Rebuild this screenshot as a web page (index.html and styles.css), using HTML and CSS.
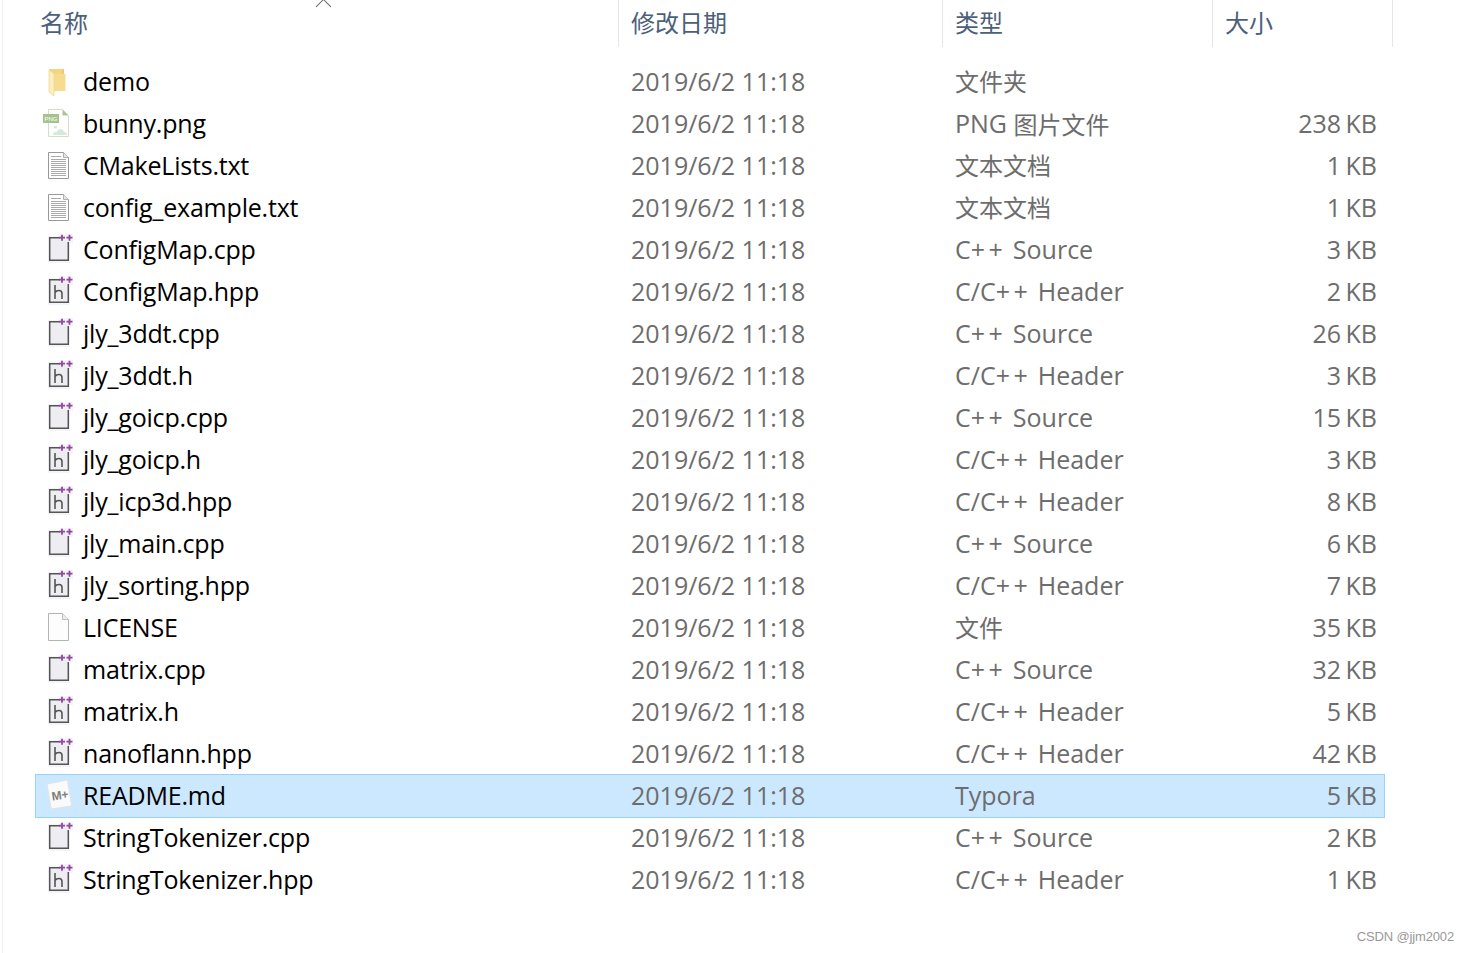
FILE: index.html
```html
<!DOCTYPE html>
<html lang="zh-CN">
<head>
  <meta charset="UTF-8">
  <title>文件列表</title>
  <link rel="stylesheet" href="styles.css">
</head>
<body>

<svg class="defs" width="0" height="0">
  <symbol id="i-folder" viewBox="0 0 26 32">
    <path d="M2 4h15v22H2z" fill="#f5d582"/>
    <path d="M7 9h11.500v17H7z" fill="#f7dc90"/>
    <path d="M17 4v5h-2V4z" fill="#eccb74"/>
    <path d="M2 5l5 3.500V31l-5-4z" fill="#fdefbd" stroke="#ecd48c" stroke-width=".7"/>
  </symbol>
  <symbol id="i-txt" viewBox="0 0 26 32">
    <path d="M1.500 3.500h15l5 5v21h-20z" fill="#fff" stroke="#999" stroke-width="1"/>
    <path d="M16.500 3.500v5h5" fill="#e6e6e6" stroke="#b0b0b0" stroke-width="1"/>
    <path d="M4 7.500h10M4 10.500h15M4 12.500h15M4 14.500h15M4 16.500h15M4 18.500h15M4 20.500h15M4 22.500h15M4 24.500h15M4 26.500h15" stroke="#aaa" stroke-width="1"/>
  </symbol>
  <symbol id="i-file" viewBox="0 0 26 32">
    <path d="M1.500 2.500h14l6 6v21h-20z" fill="#fdfdfd" stroke="#b4b4b4" stroke-width="1"/>
    <path d="M15.500 2.500v6h6" fill="#ececec" stroke="#c0c0c0" stroke-width="1"/>
  </symbol>
  <symbol id="i-cpp" viewBox="0 0 26 32">
    <path d="M1 3h12v-2h13v9h-3v20H1z" fill="#f4f4f7"/>
    <path d="M2.700 4.700h18.600v22.600H2.700z" fill="#eeeef2"/>
    <path d="M13 4.700H2.700v22.600h18.600V9" fill="none" stroke="#555" stroke-width="1.500"/>
    <path d="M12 4.700h6M15 1.700v6M19.500 4.700h6M22.500 1.700v6" stroke="#91479b" stroke-width="1.800"/>
  </symbol>
  <symbol id="i-hpp" viewBox="0 0 26 32">
    <path d="M1 3h12v-2h13v9h-3v20H1z" fill="#f4f4f7"/>
    <path d="M2.700 4.700h18.600v22.600H2.700z" fill="#eeeef2"/>
    <path d="M13 4.700H2.700v22.600h18.600V9" fill="none" stroke="#555" stroke-width="1.500"/>
    <path d="M8 10v14M8 17.500c1.500-2.500 7-3 7 1V24" fill="none" stroke="#555" stroke-width="1.600"/>
    <path d="M12 4.700h6M15 1.700v6M19.500 4.700h6M22.500 1.700v6" stroke="#91479b" stroke-width="1.800"/>
  </symbol>
</svg>

<div class="window">
  <div class="sort-mark"></div>

  <div class="header">
    <div class="col-name">名称</div>
    <div class="col-date">修改日期</div>
    <div class="col-type">类型</div>
    <div class="col-size">大小</div>
  </div>

  <div class="list">
    <div class="row"><span class="name"><svg class="icon"><use href="#i-folder"/></svg>demo</span><span class="date">2019/6/2 11:18</span><span class="type cjk">文件夹</span><span class="size"></span></div>
    <div class="row"><span class="name"><svg class="icon" viewBox="0 0 26 32">
      <path d="M1.500 2.500h14l6 6v21h-20z" fill="#fff" stroke="#cfe0c6" stroke-width="1"/>
      <path d="M15.500 2.500v6h6z" fill="#a9c793"/>
      <rect x="-4" y="7" width="16" height="9" fill="#a4c48d"/>
      <text x="4" y="14" class="icon-tag">PNG</text>
      <path d="M6 28c0-3 3-4 4-3 1-4 6-4 7 0 2 0 3 1 3 3z" fill="#d5e8df"/>
      <circle cx="8.500" cy="20" r="1.500" fill="#d5e8df"/>
    </svg>bunny.png</span><span class="date">2019/6/2 11:18</span><span class="type">PNG <span class="cjk-inline">图片文件</span></span><span class="size">238 KB</span></div>
    <div class="row"><span class="name"><svg class="icon"><use href="#i-txt"/></svg>CMakeLists.txt</span><span class="date">2019/6/2 11:18</span><span class="type cjk">文本文档</span><span class="size">1 KB</span></div>
    <div class="row"><span class="name"><svg class="icon"><use href="#i-txt"/></svg>config_example.txt</span><span class="date">2019/6/2 11:18</span><span class="type cjk">文本文档</span><span class="size">1 KB</span></div>
    <div class="row"><span class="name"><svg class="icon"><use href="#i-cpp"/></svg>ConfigMap.cpp</span><span class="date">2019/6/2 11:18</span><span class="type">C<span class="plus">++</span> Source</span><span class="size">3 KB</span></div>
    <div class="row"><span class="name"><svg class="icon"><use href="#i-hpp"/></svg>ConfigMap.hpp</span><span class="date">2019/6/2 11:18</span><span class="type">C/C<span class="plus">++</span> Header</span><span class="size">2 KB</span></div>
    <div class="row"><span class="name"><svg class="icon"><use href="#i-cpp"/></svg>jly_3ddt.cpp</span><span class="date">2019/6/2 11:18</span><span class="type">C<span class="plus">++</span> Source</span><span class="size">26 KB</span></div>
    <div class="row"><span class="name"><svg class="icon"><use href="#i-hpp"/></svg>jly_3ddt.h</span><span class="date">2019/6/2 11:18</span><span class="type">C/C<span class="plus">++</span> Header</span><span class="size">3 KB</span></div>
    <div class="row"><span class="name"><svg class="icon"><use href="#i-cpp"/></svg>jly_goicp.cpp</span><span class="date">2019/6/2 11:18</span><span class="type">C<span class="plus">++</span> Source</span><span class="size">15 KB</span></div>
    <div class="row"><span class="name"><svg class="icon"><use href="#i-hpp"/></svg>jly_goicp.h</span><span class="date">2019/6/2 11:18</span><span class="type">C/C<span class="plus">++</span> Header</span><span class="size">3 KB</span></div>
    <div class="row"><span class="name"><svg class="icon"><use href="#i-hpp"/></svg>jly_icp3d.hpp</span><span class="date">2019/6/2 11:18</span><span class="type">C/C<span class="plus">++</span> Header</span><span class="size">8 KB</span></div>
    <div class="row"><span class="name"><svg class="icon"><use href="#i-cpp"/></svg>jly_main.cpp</span><span class="date">2019/6/2 11:18</span><span class="type">C<span class="plus">++</span> Source</span><span class="size">6 KB</span></div>
    <div class="row"><span class="name"><svg class="icon"><use href="#i-hpp"/></svg>jly_sorting.hpp</span><span class="date">2019/6/2 11:18</span><span class="type">C/C<span class="plus">++</span> Header</span><span class="size">7 KB</span></div>
    <div class="row"><span class="name"><svg class="icon"><use href="#i-file"/></svg>LICENSE</span><span class="date">2019/6/2 11:18</span><span class="type cjk">文件</span><span class="size">35 KB</span></div>
    <div class="row"><span class="name"><svg class="icon"><use href="#i-cpp"/></svg>matrix.cpp</span><span class="date">2019/6/2 11:18</span><span class="type">C<span class="plus">++</span> Source</span><span class="size">32 KB</span></div>
    <div class="row"><span class="name"><svg class="icon"><use href="#i-hpp"/></svg>matrix.h</span><span class="date">2019/6/2 11:18</span><span class="type">C/C<span class="plus">++</span> Header</span><span class="size">5 KB</span></div>
    <div class="row"><span class="name"><svg class="icon"><use href="#i-hpp"/></svg>nanoflann.hpp</span><span class="date">2019/6/2 11:18</span><span class="type">C/C<span class="plus">++</span> Header</span><span class="size">42 KB</span></div>
    <div class="row selected"><span class="name"><svg class="icon" viewBox="0 0 26 32">
      <path d="M0 5l20.500-4 4.200 26L4.200 30z" fill="#fafafa" stroke="#e2e2e2" stroke-width="1"/>
      <text x="4.500" y="20.500" class="icon-md" transform="rotate(-8 12 16)">M+</text>
    </svg>README.md</span><span class="date">2019/6/2 11:18</span><span class="type">Typora</span><span class="size">5 KB</span></div>
    <div class="row"><span class="name"><svg class="icon"><use href="#i-cpp"/></svg>StringTokenizer.cpp</span><span class="date">2019/6/2 11:18</span><span class="type">C<span class="plus">++</span> Source</span><span class="size">2 KB</span></div>
    <div class="row"><span class="name"><svg class="icon"><use href="#i-hpp"/></svg>StringTokenizer.hpp</span><span class="date">2019/6/2 11:18</span><span class="type">C/C<span class="plus">++</span> Header</span><span class="size">1 KB</span></div>
  </div>

  <div class="watermark">CSDN @jjm2002</div>
</div>

</body>
</html>
```
FILE: styles.css
```css
html, body {
  margin: 0;
  height: 100%;
  background: #fff;
}
body {
  font-family: "Open Sans", "Noto Sans CJK SC", sans-serif;
  font-size: 25px;
  overflow: hidden;
}
.defs {
  position: absolute;
}
symbol, .icon {
  overflow: visible;
}
.icon-tag {
  font-family: "Liberation Sans", sans-serif;
  font-size: 6px;
  letter-spacing: 0;
  fill: #fff;
  text-anchor: middle;
}
.icon-md {
  font-family: "Liberation Sans", sans-serif;
  font-size: 12px;
  font-weight: bold;
  letter-spacing: 0;
  fill: #808080;
}
.window {
  position: relative;
  height: 953px;
  margin-left: 2px;
  border-left: 1px solid #f0f0f0;
  box-sizing: border-box;
}
.sort-mark {
  position: absolute;
  left: 315px;
  top: 1px;
  width: 10px;
  height: 10px;
  border-left: 1px solid #666;
  border-top: 1px solid #666;
  transform: rotate(45deg);
}
.header {
  display: grid;
  grid-template-columns: 616px 324px 270px 180px;
  height: 47px;
  color: #4c607a;
  font-size: 24px;
  line-height: 46px;
}
.header div {
  border-right: 1px solid #e5e5e5;
  padding-left: 12px;
  box-sizing: border-box;
}
.header .col-name {
  padding-left: 37px;
}
.list {
  margin: 14px 0 0 32px;
  width: 1350px;
}
.row {
  display: grid;
  grid-template-columns: 596px 324px 270px 160px;
  height: 42px;
  line-height: 40px;
  color: #6d6d6d;
  white-space: nowrap;
}
.cjk {
  font-size: 24px;
  line-height: 42px;
}
.cjk-inline {
  font-size: 24px;
  line-height: 1;
  vertical-align: -1px;
}
.plus {
  letter-spacing: 3.5px;
}
.size {
  text-align: right;
  padding-right: 8px;
  word-spacing: -2px;
}
.selected {
  background: #cce8ff;
  box-shadow: inset 1px 0 #99d1ff, inset -1px 0 #99d1ff, 0 -1px #99d1ff, 0 1px #99d1ff;
}
.name {
  display: flex;
  align-items: center;
  height: 40px;
  color: #000;
  letter-spacing: -0.2px;
}
.icon {
  width: 26px;
  height: 32px;
  margin: 0 10px 0 12px;
  flex: none;
}
.watermark {
  position: absolute;
  right: 15px;
  bottom: 9px;
  font-family: "Liberation Sans", sans-serif;
  font-size: 13px;
  letter-spacing: -0.15px;
  color: #999;
}
```
